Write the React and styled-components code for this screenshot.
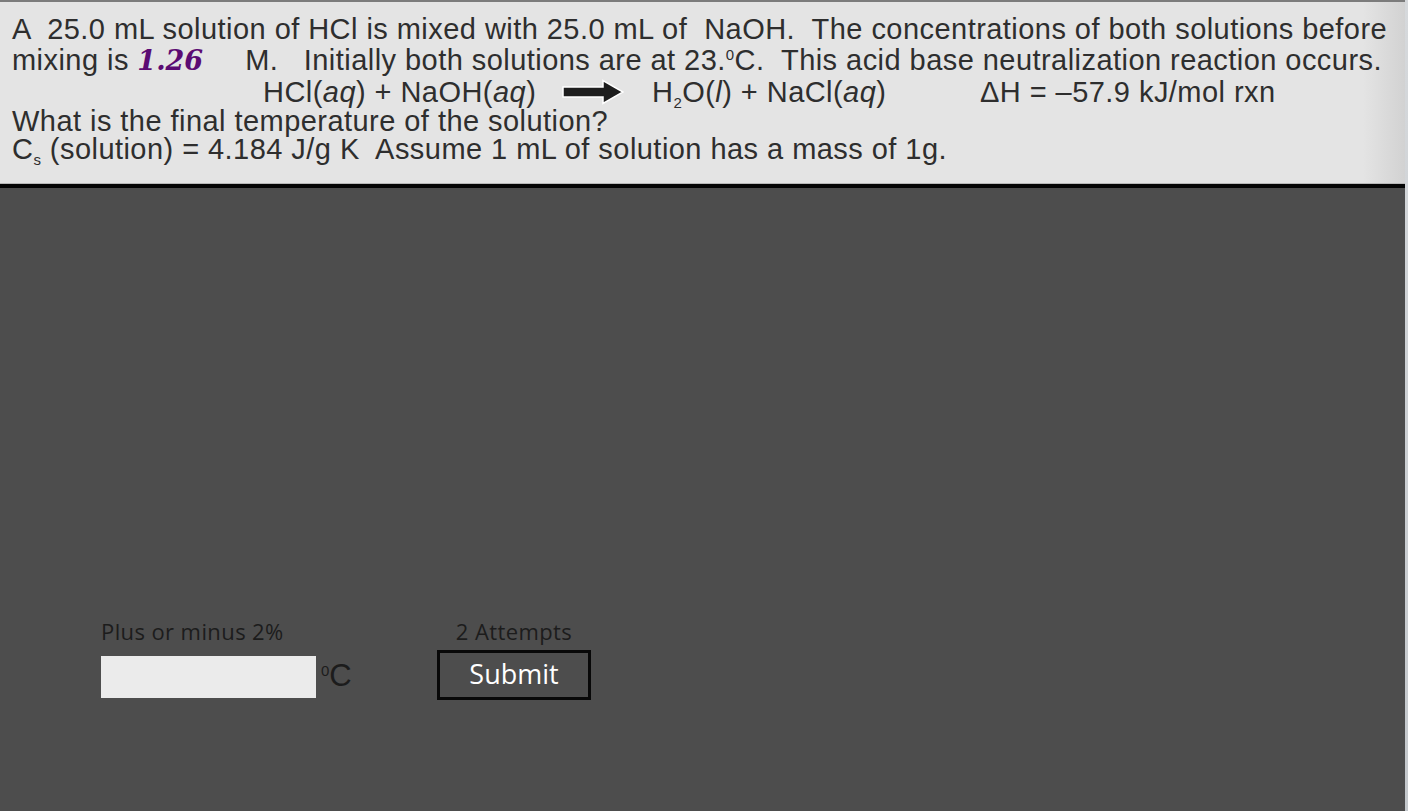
import React from 'react';
import styled, {createGlobalStyle} from 'styled-components';

const Global = createGlobalStyle`
  html, body {
    margin: 0;
    padding: 0;
    background: #4d4d4d;
  }
  #root {
    min-height: 811px;
  }
`

const Page = styled.div`
  display: flex;
  height: 811px;
  overflow: hidden;
`

const Main = styled.div`
  flex: 1;
  display: flex;
  flex-direction: column;
  background: #4d4d4d;
`

const Edge = styled.div`
  width: 3px;
  background: linear-gradient(to bottom, #d6d9dc, #c4c8cc);
`

const Question = styled.div`
  height: 169px;
  padding: 12px 0 0 12px;
  background: linear-gradient(to right, #e4e4e4 0%, #e4e4e4 97%, #d2d2d2 100%);
  border-top: 2px solid #7c7c7c;
  border-bottom: 1px solid #b8b8b8;
  box-shadow: 0 4px 0 #050505;
  font-family: "Liberation Sans", Arial, sans-serif;
  font-size: 29px;
  color: #2e2e2e;
  letter-spacing: 0.45px;
`

const Line = styled.div`
  height: ${p => p.h || 30}px;
  line-height: 30px;
  white-space: pre;
  padding-left: ${p => p.indent || 0}px;
`

const Cell = styled.span`
  display: inline-block;
  width: ${p => p.w}px;
`

const Value = styled.span`
  font-family: "DejaVu Serif", "Liberation Serif", serif;
  font-weight: bold;
  font-style: italic;
  color: #5b0b73;
  font-size: 27px;
  letter-spacing: 0;
  margin-right: 8px;
`

const Sub = styled.sub`
  font-size: 15px;
  vertical-align: -6px;
  line-height: 0;
`

const Sup = styled.sup`
  font-size: 15px;
  vertical-align: 10px;
  line-height: 0;
`

const Arrow = styled.svg`
  display: inline-block;
  width: 62px;
  height: 26px;
  vertical-align: -3px;
  margin: 0 28px 0 -1px;
`

const Workspace = styled.div`
  flex: 1;
  padding: 430px 0 0 101px;
  margin-top: 4px;
  display: flex;
`

const Group = styled.div`
  display: flex;
  flex-direction: column;
  align-items: ${p => p.center ? 'center' : 'flex-start'};
  width: ${p => p.w}px;
  font-family: "Open Sans", "Noto Sans", sans-serif;
`

const Label = styled.div`
  font-size: 22px;
  color: #1c1c1c;
  letter-spacing: 0.4px;
  height: 26px;
  line-height: 26px;
`

const Row = styled.div`
  display: flex;
  align-items: flex-start;
  margin-top: ${p => p.top || 0}px;
`

const Input = styled.input`
  width: 215px;
  height: 42px;
  box-sizing: border-box;
  border: none;
  background: #ebebeb;
  outline: none;
  padding: 0 8px;
  font-size: 20px;
`

const Unit = styled.span`
  font-family: "Liberation Sans", Arial, sans-serif;
  font-size: 31px;
  color: #1c1c1c;
  margin-left: 5px;
  line-height: 40px;
`

const Button = styled.button`
  width: 154px;
  height: 50px;
  box-sizing: border-box;
  background: #4d4d4d;
  border: 3px solid #080808;
  color: #ffffff;
  font-family: "Open Sans", "Noto Sans", sans-serif;
  font-size: 27px;
  padding: 0 0 4px;
  cursor: pointer;
`

const App = () => {
    return (
        <Page>
            <Global/>
            <Main>
                <Question>
                    <Line h={31}>A  25.0 mL solution of HCl is mixed with 25.0 mL of  NaOH.  The concentrations of both solutions before</Line>
                    <Line h={32}>mixing is <Value>1.26</Value>    M.   Initially both solutions are at 23.<Sup>0</Sup>C.  This acid base neutralization reaction occurs.</Line>
                    <Line h={29} indent={251}>
                        <Cell w={300}>HCl(<i>aq</i>) + NaOH(<i>aq</i>)</Cell>
                        <Arrow viewBox="0 0 62 26">
                            <path d="M1 8 H41 V1.5 L61 13 L41 24.5 V18 H1 Z" fill="#1e1e1e" stroke="#ffffff" strokeWidth="1.5" strokeLinejoin="miter"/>
                        </Arrow>
                        <Cell w={328}>H<Sub>2</Sub>O(<i>l</i>) + NaCl(<i>aq</i>)</Cell>
                        ΔH = –57.9 kJ/mol rxn
                    </Line>
                    <Line h={28}>What is the final temperature of the solution?</Line>
                    <Line>C<Sub>s</Sub> (solution) = 4.184 J/g K  Assume 1 mL of solution has a mass of 1g.</Line>
                </Question>
                <Workspace>
                    <Group w={336}>
                        <Label>Plus or minus 2%</Label>
                        <Row top={12}>
                            <Input type="text"/>
                            <Unit><Sup>0</Sup>C</Unit>
                        </Row>
                    </Group>
                    <Group center w={154}>
                        <Label>2 Attempts</Label>
                        <Row top={6}>
                            <Button>Submit</Button>
                        </Row>
                    </Group>
                </Workspace>
            </Main>
            <Edge/>
        </Page>
    );
};

export default App;
